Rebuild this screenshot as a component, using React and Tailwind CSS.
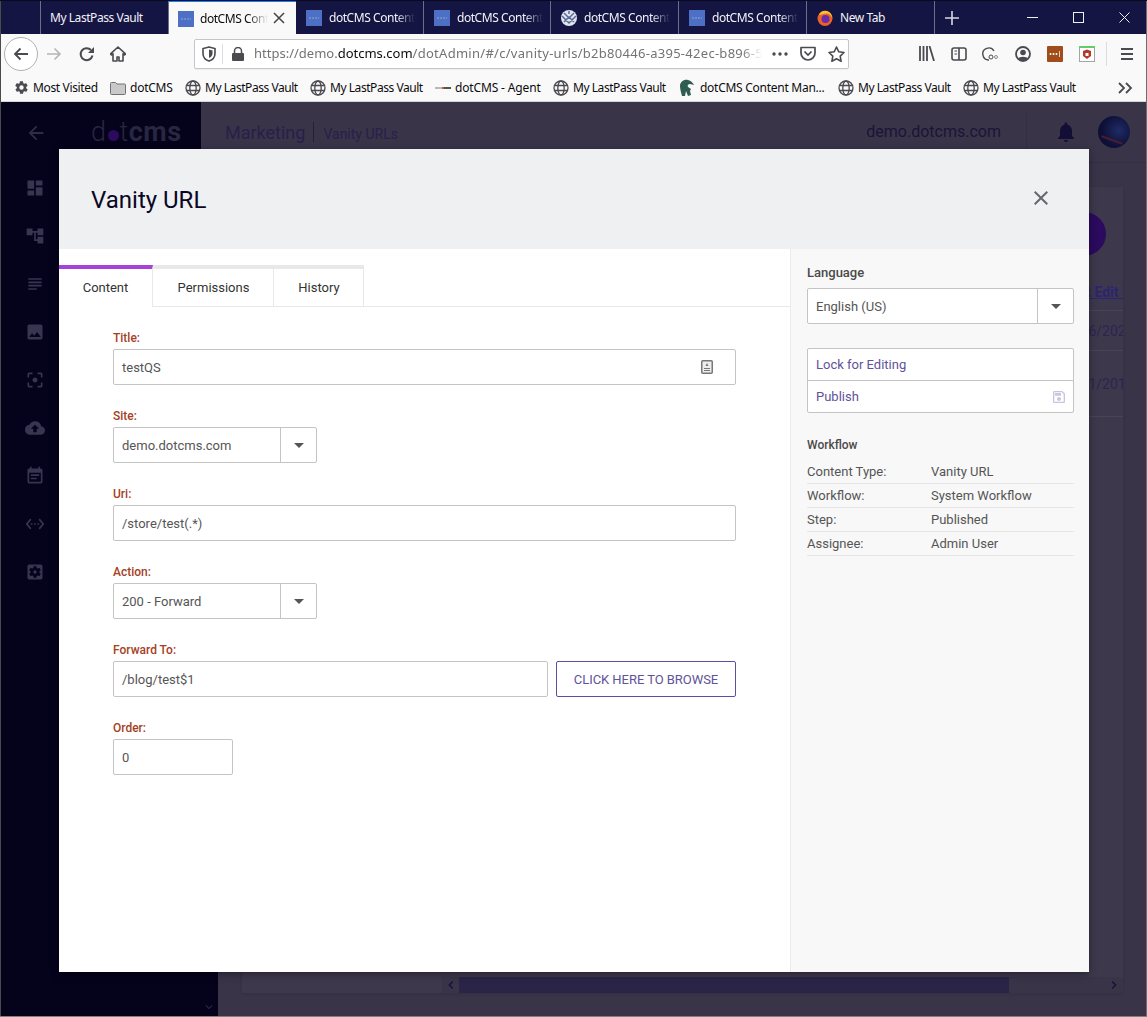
import React from "react";
import {
  MdDashboard, MdAccountTree, MdSubject, MdImage, MdFilterCenterFocus, MdCloudUpload,
  MdEventNote, MdSettingsEthernet, MdSettingsApplications, MdNotifications, MdArrowBack, MdClose,
  MdKeyboardArrowDown, MdKeyboardArrowLeft, MdKeyboardArrowRight, MdOutlineSave
} from "react-icons/md";

const ui = "font-['Noto_Sans','Open_Sans',sans-serif]";

function DotFav() {
  return (
    <svg width="16" height="16" viewBox="0 0 16 16" className="shrink-0">
      <rect width="16" height="16" fill="#4d6fc4" />
      <path d="M3 8h10" stroke="#93a7dd" strokeWidth="1" strokeDasharray="2 1" />
    </svg>
  );
}
function MeshFav() {
  return (
    <svg width="16" height="16" viewBox="0 0 16 16" className="shrink-0">
      <circle cx="8" cy="8" r="8" fill="#dfe4f0" />
      <path d="M1 6l7 7 7-7M3 3l5 5 5-5M8 1v3M3 12l5-5 5 5" stroke="#5a6a94" strokeWidth="1.5" fill="none" />
    </svg>
  );
}
function FoxFav() {
  return (
    <svg width="16" height="16" viewBox="0 0 16 16" className="shrink-0">
      <circle cx="8" cy="8.5" r="7.5" fill="#e8622a" />
      <path d="M2 5C3 1.500 7 0 10 1c3 1 5.500 4 5.200 7C14 5 12 3.500 9.500 3.500 6 3.500 4 5 2 5z" fill="#fbc02d" />
      <circle cx="8.500" cy="9" r="4" fill="#6a2ca8" />
    </svg>
  );
}

function Tab({ icon, text, active, width, close, textW }) {
  return (
    <div className={`relative flex items-center h-[34px] shrink-0 ${active ? "pl-[9px] pt-[1px] bg-[#f9f9fa] border-t-2 border-t-[#0a84ff] text-[#0c0c0d]" : `${icon ? "pl-[10px]" : "pl-[9px]"} pt-[2px] border-r border-r-[#6d6d8c] text-[#f2f2f6]`} ${width}`}>
      {icon}
      <span className={`${icon ? (active ? "ml-[6px]" : "ml-[7px]") : ""} overflow-hidden whitespace-nowrap text-[12px] tracking-[-0.45px] ${textW}`}>{text}</span>
      {close && (
        <svg width="12" height="12" viewBox="0 0 12 12" className="absolute right-[11px] top-[10px]">
          <path d="M1 1l10 10M11 1L1 11" stroke="#444" strokeWidth="1.5" />
        </svg>
      )}
    </div>
  );
}

const fade = "w-[86px] [mask-image:linear-gradient(to_right,black_78%,transparent)]";

function TabBar() {
  return (
    <div className={`flex h-[34px] bg-[#151544] ${ui}`}>
      <div className="w-[41px] border-r border-r-[#6d6d8c] shrink-0" />
      <Tab text="My LastPass Vault" width="w-[128px]" textW="w-[110px]" />
      <Tab text="dotCMS Content Management" active close width="w-[127px]" textW="w-[68px] [mask-image:linear-gradient(to_right,black_70%,transparent)]" icon={<DotFav />} />
      <Tab text="dotCMS Content Management" width="w-[128px]" textW={fade} icon={<DotFav />} />
      <Tab text="dotCMS Content Management" width="w-[127px]" textW={fade} icon={<DotFav />} />
      <Tab text="dotCMS Content Management" width="w-[128px]" textW={fade} icon={<MeshFav />} />
      <Tab text="dotCMS Content Management" width="w-[128px]" textW={fade} icon={<DotFav />} />
      <Tab text="New Tab" width="w-[128px]" textW="w-[80px]" icon={<FoxFav />} />
      <div className="w-[34px] flex items-center justify-center shrink-0 pt-[2px]">
        <svg width="14" height="14" viewBox="0 0 14 14"><path d="M7 0v14M0 7h14" stroke="#d8d8e4" strokeWidth="1.6" /></svg>
      </div>
      <div className="w-[40px] shrink-0" />
      <div className="w-[46px] flex items-center justify-center shrink-0">
        <svg width="11" height="11" viewBox="0 0 11 11"><path d="M0 5.500h11" stroke="#f0f0f4" strokeWidth="1" /></svg>
      </div>
      <div className="w-[46px] flex items-center justify-center shrink-0">
        <svg width="11" height="11" viewBox="0 0 11 11"><rect x=".5" y=".5" width="10" height="10" stroke="#f0f0f4" fill="none" /></svg>
      </div>
      <div className="w-[46px] flex items-center justify-center shrink-0">
        <svg width="11" height="11" viewBox="0 0 11 11"><path d="M.5.5l10 10M10.500.5l-10 10" stroke="#f0f0f4" /></svg>
      </div>
    </div>
  );
}

function Toolbar() {
  const c = "#4a4a4f";
  return (
    <div className={`flex items-center h-[38px] pt-[1px] bg-[#f9f9fa] ${ui}`}>
      <div className="ml-[4px] w-[34px] h-[34px] rounded-full border border-[#b1b1b3] bg-white flex items-center justify-center shrink-0">
        <svg width="16" height="16" viewBox="0 0 16 16"><path d="M15 8H2M7.500 2.500L2 8l5.500 5.500" stroke={c} strokeWidth="1.8" fill="none" /></svg>
      </div>
      <div className="w-[32px] flex justify-center shrink-0">
        <svg width="16" height="16" viewBox="0 0 16 16"><path d="M1 8h13M8.500 2.500L14 8l-5.500 5.500" stroke="#b5b5b7" strokeWidth="1.600" fill="none" /></svg>
      </div>
      <div className="w-[33px] flex justify-center shrink-0">
        <svg width="16" height="16" viewBox="0 0 16 16"><path d="M13.500 9.500A6 6 0 1 1 12 4" stroke={c} strokeWidth="2" fill="none" /><path d="M15 1v6H9z" fill={c} /></svg>
      </div>
      <div className="w-[30px] flex justify-center shrink-0">
        <svg width="16" height="16" viewBox="0 0 16 16"><path d="M8 1L0.500 8l1 1L3 7.800V15h4v-4h2v4h4V7.800L14.500 9l1-1z" fill="none" stroke={c} strokeWidth="1.600" strokeLinejoin="round" /></svg>
      </div>
      <div className="ml-[61px] w-[655px] h-[30px] bg-white border border-[#c6c6c8] rounded-[2px] flex items-center shrink-0 shadow-[0_1px_1px_rgba(0,0,0,0.05)]">
        <div className="w-[27px] flex justify-center shrink-0">
          <svg width="14" height="16" viewBox="0 0 14 16"><path d="M7 1l6 1.500v5c0 4-3 6.500-6 7.500-3-1-6-3.500-6-7.500v-5z" fill="none" stroke={c} strokeWidth="1.600" /><path d="M7 3.500l3.500 1v3c0 2-1.500 3.500-3.500 4.500z" fill={c} /></svg>
        </div>
        <div className="w-px h-[20px] bg-[#dcdcde]" />
        <div className="w-[29px] flex justify-center shrink-0">
          <svg width="12" height="14" viewBox="0 0 12 14"><path d="M2.500 6V4a3.500 3.500 0 0 1 7 0v2" fill="none" stroke={c} strokeWidth="1.500" /><rect y="6" width="12" height="8" rx="1" fill={c} /></svg>
        </div>
        <div className="ml-[2px] w-[508px] overflow-hidden whitespace-nowrap text-[13px] text-[#737373] [mask-image:linear-gradient(to_right,black_96%,transparent)]">
          https://demo.<span className="text-[#0c0c0d]">dotcms.com</span><span className="tracking-[0.28px]">/dotAdmin/#/c/vanity-urls/b2b80446-a395-42ec-b896-5</span>
        </div>
        <div className="ml-[8px] w-[20px] flex justify-center shrink-0">
          <svg width="16" height="4" viewBox="0 0 16 4"><circle cx="2" cy="2" r="1.700" fill={c} /><circle cx="8" cy="2" r="1.700" fill={c} /><circle cx="14" cy="2" r="1.700" fill={c} /></svg>
        </div>
        <div className="ml-[8px] w-[20px] flex justify-center shrink-0">
          <svg width="16" height="15" viewBox="0 0 16 15"><path d="M1 1.500h14v5.500a7 7 0 0 1-14 0z" fill="none" stroke={c} strokeWidth="1.700" strokeLinejoin="round" /><path d="M4.500 5.500L8 9l3.500-3.500" fill="none" stroke={c} strokeWidth="1.700" /></svg>
        </div>
        <div className="ml-[8px] w-[20px] flex justify-center shrink-0">
          <svg width="17" height="16" viewBox="0 0 17 16"><path d="M8.500 1l2.300 4.800 5.200.7-3.800 3.600.9 5.200-4.600-2.500-4.600 2.500.9-5.200L1 6.500l5.200-.7z" fill="none" stroke={c} strokeWidth="1.600" strokeLinejoin="round" /></svg>
        </div>
      </div>
      <div className="ml-[69px] w-[18px] flex justify-center shrink-0">
        <svg width="16" height="15" viewBox="0 0 16 15"><path d="M1 0v15M4.500 0v15M8 0v15M10.500 0L15 15" stroke={c} strokeWidth="1.800" fill="none" /></svg>
      </div>
      <div className="ml-[14px] w-[18px] flex justify-center shrink-0">
        <svg width="16" height="14" viewBox="0 0 16 14"><rect x="1" y="1" width="14" height="12" rx="2" fill="none" stroke={c} strokeWidth="1.600" /><path d="M8 1v12" stroke={c} strokeWidth="1.600" /><path d="M3.500 4h2.500M3.500 7h2.500" stroke={c} strokeWidth="1.200" /></svg>
      </div>
      <div className="ml-[14px] w-[18px] flex justify-center shrink-0 relative">
        <svg width="18" height="14" viewBox="0 0 18 14"><path d="M7 13A6 6 0 1 1 12 4" fill="none" stroke={c} strokeWidth="1.400" /><circle cx="9" cy="10" r="2" fill="none" stroke={c} /><circle cx="14" cy="10" r="1.500" fill="none" stroke="#8a8a8a" /></svg>
      </div>
      <div className="ml-[14px] w-[18px] flex justify-center shrink-0">
        <svg width="16" height="16" viewBox="0 0 16 16"><circle cx="8" cy="8" r="7" fill="none" stroke={c} strokeWidth="1.800" /><circle cx="8" cy="6.500" r="2.800" fill={c} /><path d="M3 13c1-3 9-3 10 0l-2 2H5z" fill={c} /></svg>
      </div>
      <div className="ml-[14px] w-[18px] flex justify-center shrink-0">
        <svg width="16" height="16" viewBox="0 0 16 16"><rect width="16" height="16" rx="1" fill="#a04c1b" /><circle cx="3.500" cy="8" r="1" fill="#fff" /><circle cx="6.500" cy="8" r="1" fill="#fff" /><circle cx="9.500" cy="8" r="1" fill="#fff" /><path d="M12.500 5v6" stroke="#e6c9b4" /></svg>
      </div>
      <div className="ml-[14px] w-[18px] flex justify-center shrink-0">
        <svg width="16" height="16" viewBox="0 0 16 16"><rect x=".5" y=".5" width="15" height="15" fill="#fff" stroke="#a5a5a5" /><rect width="16" height="2" fill="#5fcf6a" /><path d="M4 5l4-1.500L12 5v5l-4 3-4-3z" fill="#b5372a" /><path d="M6.500 7v3h3V7z" fill="#fff" /></svg>
      </div>
      <div className="ml-[10px] w-px h-[24px] bg-[#dcdcde] shrink-0" />
      <div className="ml-[11px] w-[18px] flex justify-center shrink-0">
        <svg width="16" height="14" viewBox="0 0 16 14"><path d="M2 2h12M2 7h12M2 12h12" stroke={c} strokeWidth="2" /></svg>
      </div>
    </div>
  );
}

function Globe() {
  return (
    <svg width="16" height="16" viewBox="0 0 16 16" className="shrink-0">
      <g fill="none" stroke="#4a4a4f" strokeWidth="1.300">
        <circle cx="8" cy="8" r="7" />
        <ellipse cx="8" cy="8" rx="3.200" ry="7" />
        <path d="M1.500 5.500h13M1.500 10.500h13" />
      </g>
    </svg>
  );
}
function Bm({ icon, text, width, track }) {
  return (
    <div className={`flex items-center shrink-0 ${width}`}>
      {icon}
      <span className={`ml-[4px] text-[12px] text-[#0c0c0d] whitespace-nowrap ${track}`}>{text}</span>
    </div>
  );
}
function Bookmarks() {
  return (
    <div className={`flex items-center h-[30px] pt-[2px] bg-[#f9f9fa] pl-[14px] border-b border-b-[#d4d4d6] ${ui}`}>
      <Bm width="w-[96px]" text="Most Visited" track="tracking-[-0.35px]" icon={
        <svg width="15" height="15" viewBox="0 0 24 24" className="shrink-0"><path fill="#4a4a4f" d="M19.400 13c.04-.3.1-.7.1-1s-.03-.7-.1-1l2.100-1.600c.2-.15.25-.4.1-.6l-2-3.500c-.1-.2-.4-.3-.6-.2l-2.500 1c-.5-.4-1.100-.7-1.700-1l-.4-2.600c0-.3-.2-.5-.5-.5h-4c-.3 0-.5.2-.5.4l-.4 2.700c-.6.2-1.200.6-1.700 1l-2.500-1c-.2-.1-.5 0-.6.2l-2 3.500c-.1.200-.1.500.1.600L4.600 11c-.1.300-.1.700-.1 1s0 .7.1 1l-2.100 1.600c-.2.15-.25.4-.1.6l2 3.500c.1.2.4.3.6.2l2.500-1c.5.4 1.100.7 1.700 1l.4 2.600c0 .3.2.5.500.5h4c.3 0 .5-.2.5-.4l.4-2.700c.6-.2 1.200-.6 1.700-1l2.500 1c.2.1.5 0 .6-.2l2-3.500c.1-.2.100-.5-.1-.6zM12 15.500a3.500 3.500 0 1 1 0-7 3.500 3.500 0 0 1 0 7z" /></svg>
      } />
      <Bm width="w-[75px]" text="dotCMS" track="tracking-[-0.25px]" icon={
        <svg width="16" height="14" viewBox="0 0 16 14" className="shrink-0"><path d="M.5 2.500a1 1 0 0 1 1-1h4l1.500 1.500h7.500a1 1 0 0 1 1 1v8.500a1 1 0 0 1-1 1h-13a1 1 0 0 1-1-1z" fill="#c9c9c9" stroke="#737373" /></svg>
      } />
      <Bm width="w-[125px]" text="My LastPass Vault" track="tracking-[-0.45px]" icon={<Globe />} />
      <Bm width="w-[125px]" text="My LastPass Vault" track="tracking-[-0.45px]" icon={<Globe />} />
      <Bm width="w-[118px]" text="dotCMS - Agent" track="tracking-[-0.15px]" icon={
        <svg width="16" height="16" viewBox="0 0 16 16" className="shrink-0"><path d="M0 8h7" stroke="#b9b9b9" strokeWidth="2" /><path d="M7 8h2" stroke="#d2503c" strokeWidth="2" /><path d="M9 8h7" stroke="#555" strokeWidth="2" /></svg>
      } />
      <Bm width="w-[126px]" text="My LastPass Vault" track="tracking-[-0.45px]" icon={<Globe />} />
      <div className="flex items-center shrink-0 w-[159px]">
        <svg width="16" height="18" viewBox="0 0 16 18" className="shrink-0"><path d="M3 17c-1-4-2-7-2-10C1 3 5 0 9 1c3 .6 5 3 6 5l-4-1c-2 0-3 2-2 3l3 2-1 2 1 4-3 1-2-5-1 5z" fill="#2f5d50" /></svg>
        <span className="ml-[5px] text-[12px] text-[#0c0c0d] whitespace-nowrap tracking-[-0.27px]">dotCMS Content Man...</span>
      </div>
      <Bm width="w-[125px]" text="My LastPass Vault" track="tracking-[-0.45px]" icon={<Globe />} />
      <Bm width="w-[155px]" text="My LastPass Vault" track="tracking-[-0.45px]" icon={<Globe />} />
      <svg width="15" height="12" viewBox="0 0 15 12" className="shrink-0"><path d="M1 1l5 5-5 5M8 1l5 5-5 5" fill="none" stroke="#4a4a4f" strokeWidth="1.800" /></svg>
    </div>
  );
}

function NavIcon({ I }) {
  return <div className="h-[48px] flex items-center justify-center w-[70px]"><I size={20} color="#39344f" /></div>;
}

function Background() {
  return (
    <div className="flex flex-col h-[914px] bg-[#3a3449] font-['Roboto',sans-serif] overflow-hidden">
      <div className="flex h-[61px] shrink-0">
        <div className="w-[201px] bg-[#05021c] flex items-center shrink-0">
          <div className="w-[72px] flex justify-center"><MdArrowBack size={22} color="#2f2c46" /></div>
          <div className="ml-[19px] flex items-baseline text-[27px] leading-none text-[#282640] tracking-[0.5px]">
            <span className="font-light">d</span>
            <span className="w-[11px] h-[11px] rounded-full bg-[#2b0a5f] mx-[1px] self-center mt-[5px]" />
            <span className="font-light">t</span>
            <span className="font-bold">cms</span>
          </div>
        </div>
        <div className="flex-1 flex items-center border-b border-b-[#332d45]">
          <span className="ml-[24px] text-[18px] text-[#25214a]">Marketing</span>
          <div className="ml-[8px] w-px h-[20px] bg-[#231f3e]" />
          <span className="ml-[9px] mt-[4px] text-[14px] text-[#25214a]">Vanity URLs</span>
          <span className="ml-auto text-[16px] text-[#191537]">demo.dotcms.com</span>
          <div className="ml-[25px] w-px h-[36px] bg-[#342e44]" />
          <div className="ml-[27px] w-[24px] flex justify-center"><MdNotifications size={24} color="#120e35" /></div>
          <div className="ml-[20px] mr-[17px] w-[32px] h-[32px] rounded-full bg-[radial-gradient(circle_at_65%_45%,#1f2c66,#0e1038_60%,#0a0c2a)] relative overflow-hidden">
            <div className="absolute left-[3px] top-[23px] w-[22px] h-[2px] bg-[#4a1c2c] rotate-[20deg]" />
          </div>
        </div>
      </div>
      <div className="flex flex-1 min-h-0">
        <div className="w-[218px] bg-[#05021c] shrink-0 flex flex-col relative">
          <div className="mt-[1px]">
            <NavIcon I={MdDashboard} />
            <NavIcon I={MdAccountTree} />
            <NavIcon I={MdSubject} />
            <NavIcon I={MdImage} />
            <NavIcon I={MdFilterCenterFocus} />
            <NavIcon I={MdCloudUpload} />
            <NavIcon I={MdEventNote} />
            <NavIcon I={MdSettingsEthernet} />
            <NavIcon I={MdSettingsApplications} />
          </div>
          <div className="absolute right-[2px] bottom-[2px]"><MdKeyboardArrowDown size={14} color="#2a2748" /></div>
        </div>
        <div className="flex-1 pl-[24px] pr-[24px] pt-[24px]">
          <div className="w-[881px] h-[806px] bg-[#3e384d] flex flex-col overflow-hidden shadow-[0_1px_3px_rgba(0,0,0,0.12)]">
            <div className="h-[88px] relative border-b border-b-[#3e384d]">
              <div className="absolute left-[820px] top-[25px] w-[44px] h-[44px] rounded-full bg-[#2b0a5f]" />
            </div>
            <div className="h-[36px] shrink-0 flex items-center border-b border-b-[#494358] pl-[822px] whitespace-nowrap text-[14px] font-bold text-[#2b2470] underline">Last Edit Date</div>
            <div className="h-[40px] shrink-0 flex items-center pt-[2px] border-b border-b-[#494358] pl-[817px] whitespace-nowrap text-[14px] text-[#2a2650]">01/16/2020</div>
            <div className="h-[66px] shrink-0 flex items-center pt-[2px] border-b border-b-[#494358] pl-[817px] whitespace-nowrap text-[14px] text-[#2a2650]">03/21/2019</div>
            <div className="flex-1" />
            <div className="h-[16px] shrink-0 flex items-stretch bg-[#3a3449]">
              <div className="w-[200px] bg-[#3e384d] shrink-0" />
              <div className="w-[17px] flex items-center justify-center shrink-0"><MdKeyboardArrowLeft size={16} color="#15113a" /></div>
              <div className="w-[550px] bg-[#2a2547] shrink-0" />
              <div className="flex-1 flex items-center justify-end pr-[1px]"><MdKeyboardArrowRight size={16} color="#15113a" /></div>
            </div>
          </div>
        </div>
      </div>
    </div>
  );
}

function Field({ label, children }) {
  return (
    <div className="mb-[23px]">
      <div className="h-[14px] pt-[2px] flex items-center text-[12px] font-medium text-[#a5411f] mb-[5px]">{label}</div>
      {children}
    </div>
  );
}
function TextBox({ value, width, icon }) {
  return (
    <div className={`h-[36px] ${width} bg-white border border-[#c4c4c4] rounded-[2px] flex items-center pl-[8px] text-[13px] text-[#555555] shrink-0`}>
      <span className="flex-1 pt-[2px]">{value}</span>
      {icon}
    </div>
  );
}
function Select({ value, width, arrowW }) {
  return (
    <div className={`h-[36px] ${width} bg-white border border-[#c4c4c4] rounded-[2px] flex items-center text-[13px] text-[#555555]`}>
      <span className="flex-1 pl-[8px] pt-[2px]">{value}</span>
      <div className={`h-full ${arrowW} border-l border-l-[#c4c4c4] flex items-center justify-center`}>
        <svg width="10" height="5" viewBox="0 0 10 5"><path d="M0 0h10L5 5z" fill="#555555" /></svg>
      </div>
    </div>
  );
}

function Modal() {
  return (
    <div className="absolute left-[59px] top-[149px] w-[1030px] h-[823px] flex flex-col bg-white font-['Roboto',sans-serif] shadow-[0_2px_8px_rgba(0,0,0,0.4)]">
      <div className="h-[100px] shrink-0 bg-[#eff0f2] flex items-center justify-between pl-[32px] pr-[36px]">
        <span className="text-[24px] text-[#0a0725] pt-[2px]">Vanity URL</span>
        <MdClose size={24} color="#666672" className="-mt-[2px]" />
      </div>
      <div className="flex flex-1 min-h-0">
        <div className="w-[731px] shrink-0 pt-[16px]">
          <div className="flex h-[42px] border-b border-b-[#e8e8e8] text-[13px] text-[#333333]">
            <div className="w-[94px] border-t-4 border-t-[#a542d8] border-r border-r-[#e8e8e8] bg-white flex items-center justify-center h-[42px]">Content</div>
            <div className="w-[121px] pl-[1px] border-t-4 border-t-[#e8e8e8] border-r border-r-[#e8e8e8] flex items-center justify-center">Permissions</div>
            <div className="w-[90px] pl-[1px] border-t-4 border-t-[#e8e8e8] border-r border-r-[#e8e8e8] flex items-center justify-center">History</div>
          </div>
          <div className="pl-[54px] pt-[23px]">
            <Field label="Title:">
              <TextBox value="testQS" width="w-[623px]" icon={
                <svg width="12" height="14" viewBox="0 0 12 14" className="mr-[22px]"><rect x=".75" y=".75" width="10.500" height="12.500" rx="1" fill="#eee" stroke="#777" strokeWidth="1.500" /><path d="M6 3l1.500 3h-3z" fill="#777" /><path d="M3 8h6v1H3zM3 10h6v1H3z" fill="#777" /></svg>
              } />
            </Field>
            <Field label="Site:"><Select value="demo.dotcms.com" width="w-[204px]" arrowW="w-[36px]" /></Field>
            <Field label="Uri:"><TextBox value="/store/test(.*)" width="w-[623px]" /></Field>
            <Field label="Action:"><Select value="200 - Forward" width="w-[204px]" arrowW="w-[36px]" /></Field>
            <Field label="Forward To:">
              <div className="flex gap-[8px]">
                <TextBox value="/blog/test$1" width="w-[435px]" />
                <div className="w-[180px] h-[36px] pt-[2px] border border-[#5b4fa0] rounded-[2px] flex items-center justify-center text-[13px] tracking-[-0.05px] text-[#5f5399]">CLICK HERE TO BROWSE</div>
              </div>
            </Field>
            <Field label="Order:"><TextBox value="0" width="w-[120px]" /></Field>
          </div>
        </div>
        <div className="flex-1 bg-[#f8f8f8] border-l border-l-[#ebebeb] pl-[16px] pr-[15px] pt-[16px] text-[13px] text-[#555555]">
          <div className="h-[16px] flex items-center font-medium text-[#4a4a4a] mb-[7px]">Language</div>
          <Select value="English (US)" width="w-full" arrowW="w-[36px]" />
          <div className="mt-[24px] h-[65px] bg-white border border-[#c4c4c4] rounded-[2px] flex flex-col text-[#5f5399]">
            <div className="h-[32px] flex items-center pl-[8px] border-b border-b-[#c4c4c4]">Lock for Editing</div>
            <div className="flex-1 flex items-center justify-between pl-[8px] pr-[6px]">
              <span>Publish</span>
              <MdOutlineSave size={16} color="#c9c5e0" />
            </div>
          </div>
          <div className="mt-[24px] h-[14px] pt-[2px] flex items-center font-medium text-[#4a4a4a] text-[12px]">Workflow</div>
          <div className="mt-[9px]">
            {[["Content Type:", "Vanity URL"], ["Workflow:", "System Workflow"], ["Step:", "Published"], ["Assignee:", "Admin User"]].map(([a, b]) => (
              <div key={a} className="h-[24px] flex items-center border-b border-b-[#e6e6e6]">
                <span className="w-[124px]">{a}</span>
                <span>{b}</span>
              </div>
            ))}
          </div>
        </div>
      </div>
    </div>
  );
}

export default function App() {
  return (
    <div className="relative w-[1147px] h-[1017px] overflow-hidden border-b border-b-[#808080] bg-[#3a3449]">
      <TabBar />
      <Toolbar />
      <Bookmarks />
      <Background />
      <Modal />
      <div className="absolute left-0 top-0 w-px h-full bg-[#4a4a4a]" />
      <div className="absolute right-0 top-0 w-px h-full bg-[#6e6e6e]" />
      <div className="absolute left-0 top-0 w-full h-px bg-[#0a0a1e]" />
    </div>
  );
}
